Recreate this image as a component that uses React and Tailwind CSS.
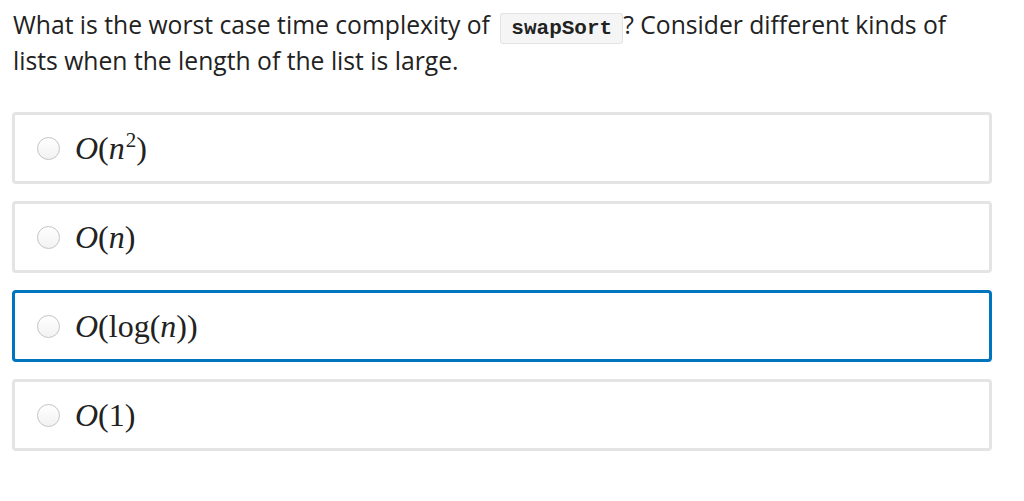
export default function App() {
  const opts = [
    { key: 'n2', sel: false, content: (<><i>O</i>(<i>n</i><sup className="text-[21px] top-[-0.55em] ml-[1px]">2</sup>)</>) },
    { key: 'n', sel: false, content: (<><i>O</i>(<i>n</i>)</>) },
    { key: 'log', sel: true, content: (<><i>O</i>(log(<i>n</i>))</>) },
    { key: '1', sel: false, content: (<><i>O</i>(1)</>) },
  ];
  return (
    <div className="w-[1024px] h-[501px] bg-white overflow-hidden">
      <div className="pl-[12px] pr-[32px] pt-[7px]">
        <p className="w-[960px] text-[24.7px] leading-[36px] text-[#222] font-['Open_Sans',sans-serif] pl-[1px]">
          What is the worst case time complexity of{' '}
          <code className="ml-[4px] font-['Liberation_Mono',monospace] font-semibold text-[21px] leading-none bg-[#f5f5f5] border border-[#e3e3e3] rounded-[3px] px-[10px] py-[3px]">swapSort</code>
          ? Consider different kinds of lists when the length of the list is large.
        </p>
        <div className="mt-[33px] flex flex-col gap-[17px] w-[980px]">
          {opts.map((o) => (
            <div
              key={o.key}
              className={
                'h-[72px] rounded-[4px] border-[3px] flex items-center pl-[22px] ' +
                (o.sel ? 'border-[#0075bf]' : 'border-[#e4e4e4]')
              }
            >
              <span className="w-[23px] h-[23px] rounded-full border border-[#c4c4c4] bg-gradient-to-b from-[#ffffff] to-[#f2f2f2] shrink-0" />
              <span className="ml-[15px] text-[32px] text-[#222] font-['Liberation_Serif',serif] leading-none">
                {o.content}
              </span>
            </div>
          ))}
        </div>
      </div>
    </div>
  );
}
